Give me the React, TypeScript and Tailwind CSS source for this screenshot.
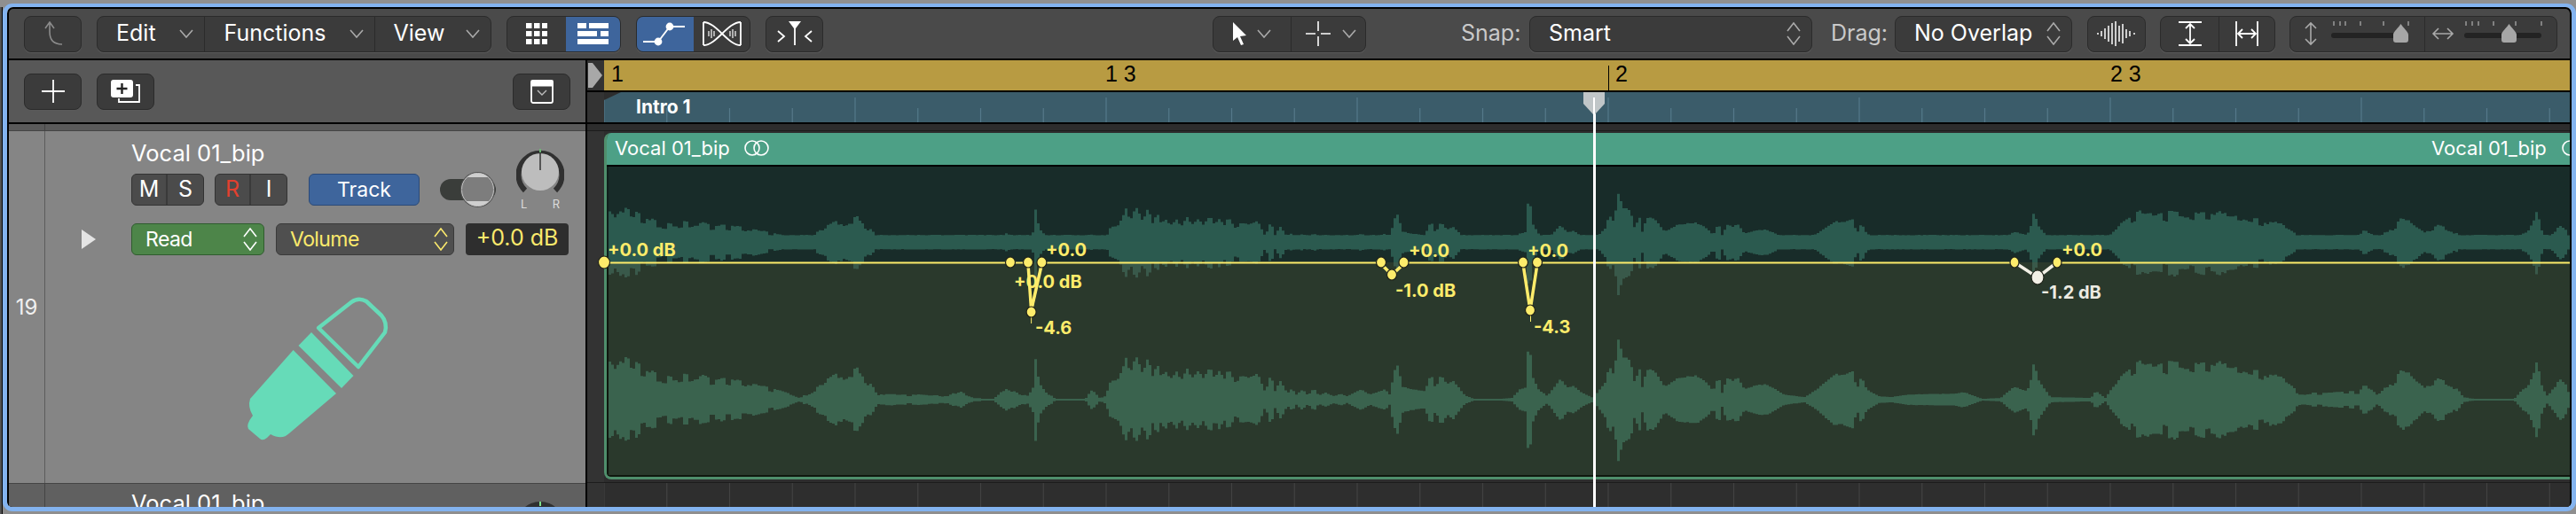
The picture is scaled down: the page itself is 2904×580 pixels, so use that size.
import React from "react";

// envelope of the take, read off the lower channel: [x, half height]
const ENV: number[][] = [
  [684, 30], [687, 62], [690, 40], [694, 45], [698, 52], [705, 46], [714, 42], [722, 36], [736, 30], [760, 28], [790, 28], [813, 25], [835, 22], [851, 18], [875, 12], [901, 2],
  [915, 12], [935, 26], [950, 30], [966, 36], [978, 24], [989, 7], [1030, 6], [1069, 5], [1079, 10], [1096, 2], [1119, 1], [1134, 16], [1145, 9], [1157, 5], [1163, 20], [1165, 52], [1168, 28], [1173, 15], [1188, 1], [1222, 1], [1230, 12], [1238, 3], [1245, 4], [1250, 20],
  [1260, 25], [1268, 48], [1273, 30], [1279, 52], [1287, 30], [1293, 50], [1298, 27], [1303, 42], [1307, 28], [1313, 33], [1318, 24], [1325, 33], [1330, 23], [1337, 36], [1342, 26], [1350, 33], [1355, 25], [1363, 38], [1368, 25], [1374, 35], [1378, 22], [1383, 36], [1392, 18], [1398, 28], [1407, 25], [1417, 30], [1425, 8], [1431, 30], [1436, 10], [1442, 22], [1450, 7], [1455, 13], [1460, 6], [1467, 12], [1473, 5], [1480, 13], [1485, 5], [1493, 8], [1503, 4], [1510, 7], [1517, 4], [1533, 12], [1543, 6], [1560, 12], [1565, 6], [1573, 43], [1580, 15], [1590, 12], [1605, 10], [1612, 30], [1617, 12], [1623, 30], [1630, 18], [1637, 22], [1650, 5], [1660, 1], [1690, 1],
  [1703, 2], [1712, 12], [1718, 14], [1722, 68], [1727, 25], [1733, 12], [1743, 4], [1758, 25], [1765, 14], [1773, 16], [1782, 8], [1795, 2], [1808, 20], [1813, 40], [1818, 28], [1823, 72], [1828, 50], [1837, 45], [1842, 15], [1846, 42], [1850, 15], [1855, 35], [1863, 35], [1875, 15], [1890, 25], [1910, 28], [1923, 20], [1930, 10], [1936, 28], [1940, 8], [1945, 25], [1952, 22], [1957, 27], [1965, 12], [1978, 17], [1990, 18], [2010, 6], [2033, 3], [2047, 12], [2067, 30], [2073, 28], [2087, 33], [2092, 12], [2097, 28], [2103, 12], [2117, 4], [2130, 3],
  [2150, 6], [2203, 7], [2212, 9], [2233, 1], [2254, 2], [2269, 15], [2284, 10], [2290, 30], [2292, 52], [2295, 25], [2310, 3], [2356, 2], [2361, 10], [2372, 2], [2387, 25], [2408, 46], [2459, 44], [2510, 42], [2561, 32], [2592, 8], [2659, 10], [2664, 18], [2679, 5], [2708, 38], [2731, 15], [2751, 30], [2777, 3], [2787, 1], [2833, 1], [2854, 25], [2859, 55], [2863, 20], [2869, 5], [2885, 25], [2897, 10],
];

function ampAt(x: number) {
  for (let i = 1; i < ENV.length; i++) {
    if (x <= ENV[i][0]) {
      const [x0, a0] = ENV[i - 1];
      const [x1, a1] = ENV[i];
      return a0 + ((a1 - a0) * (x - x0)) / (x1 - x0);
    }
  }
  return 1;
}

function noise(n: number) {
  const s = Math.sin(n * 12.9898) * 43758.5453;
  return s - Math.floor(s);
}

// stepped outline, the channels only differ in scale and noise floor
function wavePath(center: number, scale: number, floor: number) {
  const top: string[] = [];
  const bottom: string[] = [];
  for (let x = 686; x < 2897; x += 3) {
    const spiky = x < 1250 || x > 2380;
    const spike = spiky ? 0.66 + 0.42 * noise(Math.floor(x / 6)) : 1;
    const a = Math.max(ampAt(x) * scale * spike, floor);
    const up = a * (0.94 + 0.06 * noise(x));
    const down = a * (0.94 + 0.06 * noise(x + 7)) * (scale < 1 ? 1.08 : 1);
    top.push(`${x} ${(center - up).toFixed(1)} ${x + 3} ${(center - up).toFixed(1)}`);
    bottom.unshift(`${x + 3} ${(center + down).toFixed(1)} ${x} ${(center + down).toFixed(1)}`);
  }
  return `M${top.join(" L")} L${bottom.join(" L")} Z`;
}

const UPPER = wavePath(273, 0.8, 8);
const LOWER = wavePath(451, 1, 1);

const TICKS = Array.from({ length: 32 }, (_, i) => i);

function Chevron({ className = "" }: { className?: string }) {
  return (
    <svg width="16" height="10" viewBox="0 0 16 10" className={className}>
      <path d="M1 1 L8 9 L15 1" fill="none" stroke="#a9a9a9" strokeWidth="1.6" />
    </svg>
  );
}

function UpDown({ color = "#a9a9a9", className = "" }: { color?: string; className?: string }) {
  return (
    <svg width="16" height="26" viewBox="0 0 16 26" className={className}>
      <path d="M1 10 L8 1 L15 10 M1 16 L8 25 L15 16" fill="none" stroke={color} strokeWidth="1.6" />
    </svg>
  );
}

function ToolGroup({ className = "", children }: { className?: string; children?: React.ReactNode }) {
  return (
    <div className={`flex h-[41px] shrink-0 overflow-hidden rounded-lg border border-[#2b2b2b] bg-[#3b3b3b] shadow-[0_1px_0_#5a5a5a] ${className}`}>
      {children}
    </div>
  );
}

function MenuItem({ label, width, border }: { label: string; width: string; border?: boolean }) {
  return (
    <div className={`flex h-full items-center justify-between pl-[21px] pr-[12px] ${width} ${border ? "border-l border-[#2b2b2b]" : ""}`}>
      <span>{label}</span>
      <Chevron />
    </div>
  );
}

function Slider({ ticks, thumb }: { ticks: number[]; thumb: string }) {
  return (
    <div className="relative h-full w-[90px]">
      <svg width="90" height="8" viewBox="0 0 90 8" className="absolute left-0 top-[3px]">
        {ticks.map((t) => (
          <line key={t} x1={t} x2={t} y1="1" y2="6" stroke="#9a9a9a" strokeWidth="1.5" />
        ))}
      </svg>
      <div className="absolute left-0 top-[17px] h-[6px] w-[87px] rounded-full bg-[#232323]" />
      <svg width="19" height="22" viewBox="0 0 19 22" className={`absolute top-[7px] ${thumb}`}>
        <path d="M9.5 0 C12 4 18 9 18 12 V18 Q18 21 15 21 H4 Q1 21 1 18 V12 C1 9 7 4 9.5 0 Z" fill="#a6a6a6" />
      </svg>
    </div>
  );
}

function Toolbar() {
  return (
    <div className="box-content flex h-[56px] shrink-0 items-center border-b-2 border-black bg-[#4a4a4a] text-[25px] text-white">
      <ToolGroup className="ml-[17px] w-[65px] items-center justify-center">
        <svg width="26" height="28" viewBox="0 0 26 28">
          <path d="M4 8 L9 1 L14 8 M9 1 V12 C9 21 13 26 23 26" fill="none" stroke="#8c8c8c" strokeWidth="1.6" />
        </svg>
      </ToolGroup>
      <ToolGroup className="ml-[17px] w-[445px]">
        <MenuItem label="Edit" width="w-[121px]" />
        <MenuItem label="Functions" width="w-[192px]" border />
        <MenuItem label="View" width="w-[132px]" border />
      </ToolGroup>
      <ToolGroup className="ml-[17px] w-[129px]">
        <div className="flex w-[66px] items-center justify-center">
          <svg width="24" height="24" viewBox="0 0 24 24" fill="#fff">
            {[0, 9, 18].map((x) =>
              [0, 9, 18].map((y) => <rect key={`${x}${y}`} x={x} y={y} width="6.5" height="6" />)
            )}
          </svg>
        </div>
        <div className="flex flex-1 items-center justify-center bg-[#3e659c]">
          <svg width="35" height="24" viewBox="0 0 35 24" fill="#fff">
            <rect x="0" y="0" width="10" height="6" />
            <rect x="13" y="0" width="22" height="6" />
            <rect x="0" y="9" width="22" height="6" />
            <rect x="26" y="9" width="9" height="6" />
            <rect x="0" y="18" width="35" height="6" />
          </svg>
        </div>
      </ToolGroup>
      <ToolGroup className="ml-[17px] w-[129px]">
        <div className="flex w-[64px] items-center justify-center bg-[#3e659c]">
          <svg width="54" height="32" viewBox="0 0 54 32" fill="#fff" stroke="#fff" strokeWidth="1.8">
            <path d="M2 25 H19 L32 8 H49" fill="none" />
            <ellipse cx="19" cy="25" rx="3.5" ry="3.5" />
            <ellipse cx="32" cy="8" rx="3.5" ry="3.5" />
          </svg>
        </div>
        <div className="flex flex-1 items-center justify-center">
          <svg width="44" height="28" viewBox="0 0 44 28" fill="none" stroke="#fff" strokeWidth="1.8">
            <path d="M1 1 C16 1 28 27 43 27 M1 27 C16 27 28 1 43 1 M1 1 V27 M43 1 V27" />
            <path d="M7 11 V17 M10 9 V19 M13 11 V17 M31 11 V17 M34 9 V19 M37 11 V17" strokeWidth="1.2" />
          </svg>
        </div>
      </ToolGroup>
      <ToolGroup className="ml-[17px] w-[65px] items-center justify-center">
        <svg width="42" height="28" viewBox="0 0 42 28" fill="none" stroke="#fff" strokeWidth="1.8">
          <path d="M14 0 H28 L22 8 H20 Z" fill="#fff" stroke="none" />
          <path d="M21 6 V27" />
          <path d="M2 11 L9 17 L2 23 M40 11 L33 17 L40 23" />
        </svg>
      </ToolGroup>

      <ToolGroup className="ml-[439px] w-[173px]">
        <div className="flex w-[87px] items-center pl-[21px]">
          <svg width="18" height="27" viewBox="0 0 18 27" fill="#fff">
            <path d="M1 0 V21 L6 17 L10 26 L13 25 L9 16 L16 15 Z" />
          </svg>
          <Chevron className="ml-[10px]" />
        </div>
        <div className="flex flex-1 items-center border-l border-[#2b2b2b] pl-[16px]">
          <svg width="28" height="28" viewBox="0 0 28 28" stroke="#fff" strokeWidth="1.6">
            <path d="M14 0 V11 M14 17 V28 M0 14 H11 M17 14 H28" />
          </svg>
          <Chevron className="ml-[13px]" />
        </div>
      </ToolGroup>

      <span className="ml-[107px] w-[68px] shrink-0 text-[#c9c9c9]">Snap:</span>
      <ToolGroup className="ml-[9px] w-[319px] items-center justify-between pl-[21px] pr-[12px]">
        <span>Smart</span>
        <UpDown />
      </ToolGroup>
      <span className="ml-[21px] w-[64px] shrink-0 text-[#c9c9c9]">Drag:</span>
      <ToolGroup className="ml-[8px] w-[200px] items-center justify-between pl-[21px] pr-[12px]">
        <span className="whitespace-nowrap">No Overlap</span>
        <UpDown />
      </ToolGroup>

      <ToolGroup className="ml-[17px] w-[66px] items-center justify-center">
        <svg width="44" height="28" viewBox="0 0 44 28" stroke="#fff" strokeWidth="1.5">
          <path d="M1 13 V15 M5 11 V17 M9 8 V20 M13 5 V23 M17 2 V26 M21 0 V28 M25 5 V23 M29 3 V25 M33 9 V19 M37 11 V17 M42 13 V15" />
        </svg>
      </ToolGroup>
      <ToolGroup className="ml-[16px] w-[130px]">
        <div className="flex w-[65px] items-center justify-center">
          <svg width="28" height="28" viewBox="0 0 28 28" fill="none" stroke="#fff" strokeWidth="1.8">
            <path d="M1 1 H27 M1 27 H27 M14 3 V25 M9 8 L14 3 L19 8 M9 20 L14 25 L19 20" />
          </svg>
        </div>
        <div className="flex flex-1 items-center justify-center border-l border-[#2b2b2b]">
          <svg width="26" height="28" viewBox="0 0 26 28" fill="none" stroke="#fff" strokeWidth="1.8">
            <path d="M1 0 V28 M25 0 V28 M3 14 H23 M8 9 L3 14 L8 19 M18 9 L23 14 L18 19" />
          </svg>
        </div>
      </ToolGroup>
      <ToolGroup className="ml-[16px] w-[302px]">
        <div className="flex w-[151px] items-center">
          <svg width="14" height="28" viewBox="0 0 14 28" fill="none" stroke="#a9a9a9" strokeWidth="1.6" className="ml-[16px]">
            <path d="M7 2 V26 M1 8 L7 2 L13 8 M1 20 L7 26 L13 20" />
          </svg>
          <div className="ml-[16px] h-full flex-1 pt-[1px]">
            <Slider ticks={[3, 10, 16, 33, 59, 87]} thumb="left-[69px]" />
          </div>
        </div>
        <div className="flex flex-1 items-center border-l border-[#2b2b2b]">
          <svg width="26" height="14" viewBox="0 0 26 14" fill="none" stroke="#a9a9a9" strokeWidth="1.6" className="ml-[7px]">
            <path d="M2 7 H24 M8 1 L2 7 L8 13 M18 1 L24 7 L18 13" />
          </svg>
          <div className="ml-[11px] h-full flex-1 pt-[1px]">
            <Slider ticks={[2, 9, 16, 33, 58, 87]} thumb="left-[41px]" />
          </div>
        </div>
      </ToolGroup>
    </div>
  );
}

function SmallButtons({ a, b, red }: { a: string; b: string; red?: boolean }) {
  return (
    <div className="flex h-[36px] w-[82px] shrink-0 overflow-hidden rounded-md border border-[#333] bg-[#4b4b4b] text-[25px]">
      <span className={`flex w-[40px] items-center justify-center border-r-2 border-[#3a3a3a] ${red ? "text-[#e2402e]" : ""}`}>{a}</span>
      <span className="flex flex-1 items-center justify-center">{b}</span>
    </div>
  );
}

function TrackHeader() {
  return (
    <div className="flex h-[397px] bg-[#858585] text-white">
      <div className="flex w-[41px] shrink-0 items-center justify-center border-r border-[#5c5c5c] text-[24px] text-[#f0f0f0]">19</div>
      <div className="flex-1">
        <div className="flex pl-[97px]">
          <div className="w-[411px] shrink-0">
            <div className="flex h-[48px] items-center pt-[1px] text-[25.5px] leading-none">Vocal 01_bip</div>
            <div className="flex items-center">
              <SmallButtons a="M" b="S" />
              <div className="ml-[12px]">
                <SmallButtons a="R" b="I" red />
              </div>
              <div className="ml-[24px] flex h-[36px] w-[125px] items-center justify-center rounded-md border border-[#2b4a78] bg-[#3e659c] text-[23px]">Track</div>
              <div className="relative ml-[23px] h-[24px] w-[63px] rounded-full bg-[#3a3d3a]">
                <div className="absolute left-[24px] top-[-7px] h-[38px] w-[37px] rounded-full border border-[#c8c8c8] bg-[linear-gradient(#cfcfcf_0_12%,#7d7d7d_12%_85%,#cfcfcf_85%)] shadow-[0_0_0_1px_#555]" />
              </div>
            </div>
          </div>
          <div className="relative ml-[23px] mt-[20px] h-[66px] w-[54px] shrink-0">
            <svg width="54" height="56" viewBox="0 0 54 56">
              <path d="M10 47 A24.5 24.5 0 1 1 44 47" fill="none" stroke="#303030" strokeWidth="6" />
              <circle cx="27" cy="26" r="21" fill="#bdbdbd" />
              <line x1="27" y1="0" x2="27" y2="24" stroke="#333" strokeWidth="1.5" />
              <line x1="27" y1="0" x2="27" y2="4" stroke="#7fe08a" strokeWidth="1.5" />
            </svg>
            <div className="flex justify-between px-[5px] text-[13px] leading-none text-[#dcdcdc]">
              <span>L</span>
              <span>R</span>
            </div>
          </div>
        </div>
        <div className="mt-[18px] flex items-center pl-[41px]">
          <svg width="16" height="22" viewBox="0 0 16 22">
            <path d="M0 0 L16 11 L0 22 Z" fill="#e4e4e4" />
          </svg>
          <div className="ml-[40px] flex h-[36px] w-[150px] items-center justify-between rounded-md border border-[#2f5c2e] bg-[#4d8549] pl-[15px] pr-[7px] text-[23px] tracking-tight">
            <span>Read</span>
            <UpDown color="#fff" />
          </div>
          <div className="ml-[13px] flex h-[36px] w-[201px] items-center justify-between rounded-md border border-[#3a3a3a] bg-[#4f4f4f] pl-[15px] pr-[6px] text-[23px] tracking-tight text-[#fbe96c]">
            <span>Volume</span>
            <UpDown color="#fbe96c" />
          </div>
          <div className="ml-[13px] flex h-[36px] w-[116px] items-center justify-center rounded-sm bg-[#2e2e2e] pb-[3px] text-[25px] text-[#fbe96c]">+0.0 dB</div>
        </div>
        <svg width="170" height="170" viewBox="275 330 170 170" fill="#66dbb8" className="ml-[224px] mt-[44px]">
          <path d="M359 368 L396 339 Q404 333 413 338 L430 354 Q437 362 434 373 L404 412 Z" fill="none" stroke="#66dbb8" strokeWidth="4.5" strokeLinejoin="round" />
          <path d="M351 373 L398.5 422 L385 436 L336.5 388 Z" />
          <path d="M330.6 393 L379 442 L326 487 Q318 495 305 488 L301 492 Q296 496 293 493 L280 482 Q277 477 285 467 Q279 457 282 448 Z" />
        </svg>
      </div>
    </div>
  );
}

function AutomationOverlay() {
  const point = (cx: number, cy: number, fill = "#fdec6b", rx = 5.5, ry = 6) => (
    <ellipse key={`${cx}-${cy}`} cx={cx} cy={cy} rx={rx} ry={ry} fill={fill} stroke="#20231a" strokeWidth="1.2" />
  );
  return (
    <svg width="2216" height="391" viewBox="681 150 2216 391" className="pointer-events-none absolute left-0 top-0 overflow-visible">
      <defs>
        <clipPath id="above">
          <rect x="681" y="188" width="2216" height="108" />
        </clipPath>
        <clipPath id="below">
          <rect x="681" y="296" width="2216" height="242" />
        </clipPath>
      </defs>
      <path d={UPPER} fill="#2b5a4f" clipPath="url(#above)" />
      <path d={UPPER} fill="#39594a" clipPath="url(#below)" />
      <path d={LOWER} fill="#3a634e" />

      <path d="M681 296.5 H1159 L1162.6 352 L1174.4 296.5 H1557 L1569 310 L1582.5 296.5 H1717 L1725 350 L1733 296.5 H2271 M2319 296.5 H2897" fill="none" stroke="#fdec6b" strokeWidth="2" />
      <path d="M1159 298 L1162.6 350 L1174.4 298 M1557 298 L1569 310 L1582.5 298 M1717 298 L1725 350 L1733 298" fill="none" stroke="#fdec6b" strokeWidth="3.5" />
      <path d="M2271 296 L2297 313 L2319 296" fill="none" stroke="#f2f0e6" strokeWidth="3.5" />
      <path d="M1162.6 355 V365 M1725.5 353 V363" stroke="#fdec6b" strokeWidth="1" />
      {point(681, 296, "#fdec6b", 6.5, 7)}
      {point(1139, 296)}
      {point(1159, 296)}
      {point(1174.4, 296)}
      {point(1162.6, 352)}
      {point(1557, 296)}
      {point(1582.5, 296)}
      {point(1569, 310)}
      {point(1717, 296)}
      {point(1733, 296)}
      {point(1725, 350)}
      {point(2271, 296, "#fdec6b", 5, 6)}
      {point(2319, 296, "#fdec6b", 5, 6)}
      {point(2297, 313, "#f2f0e6", 7, 8)}
    </svg>
  );
}

function Region() {
  return (
    <div className="relative mt-[2px] h-[391px] w-[2216px] overflow-visible">
      <div className="flex h-full flex-col overflow-hidden rounded-l-lg border-b-[3px] border-l-[3px] border-[#4f8f6c]">
        <div className="flex h-[38px] shrink-0 items-center justify-between border-b-2 border-black bg-[#4da086] pb-[2px] pl-[9px] text-[22px] text-white">
          <div className="flex items-center">
            <span>Vocal 01_bip</span>
            <svg width="30" height="18" viewBox="0 0 30 18" fill="none" stroke="#fff" strokeWidth="1.6" className="ml-[15px]">
              <circle cx="10" cy="9" r="8" />
              <circle cx="20" cy="9" r="8" />
            </svg>
          </div>
          <div className="flex w-[156px] shrink-0 items-center overflow-hidden">
            <span className="whitespace-nowrap">Vocal 01_bip</span>
            <svg width="20" height="18" viewBox="0 0 20 18" fill="none" stroke="#fff" strokeWidth="1.6" className="ml-[16px] shrink-0">
              <circle cx="10" cy="9" r="8" />
            </svg>
          </div>
        </div>
        <div className="h-[108px] shrink-0 border-l-2 border-[#10201c] bg-[#182c29]" />
        <div className="flex-1 border-b-2 border-l-2 border-[#10180f] bg-[#2a392c]" />
      </div>
      <AutomationOverlay />
      <span className="absolute left-[4px] top-[117px] text-[20px] font-bold text-[#fdec6b]">+0.0 dB</span>
      <span className="absolute left-[498px] top-[117px] text-[20px] font-bold text-[#fdec6b]">+0.0</span>
      <span className="absolute left-[462px] top-[153px] text-[20px] font-bold text-[#fdec6b]">+0.0 dB</span>
      <span className="absolute left-[486px] top-[205px] text-[20px] font-bold text-[#fdec6b]">-4.6</span>
      <span className="absolute left-[907px] top-[118px] text-[20px] font-bold text-[#fdec6b]">+0.0</span>
      <span className="absolute left-[892px] top-[163px] text-[20px] font-bold text-[#fdec6b]">-1.0 dB</span>
      <span className="absolute left-[1041px] top-[118px] text-[20px] font-bold text-[#fdec6b]">+0.0</span>
      <span className="absolute left-[1048px] top-[204px] text-[20px] font-bold text-[#fdec6b]">-4.3</span>
      <span className="absolute left-[1643px] top-[117px] text-[20px] font-bold text-[#fdec6b]">+0.0</span>
      <span className="absolute left-[1620px] top-[165px] text-[20px] font-bold text-[#ecebe2]">-1.2 dB</span>
    </div>
  );
}

function Timeline() {
  return (
    <div className="flex min-w-0 flex-1 flex-col bg-[#2d2d2d]">
      {/* ruler */}
      <div className="flex h-[36px] shrink-0 border-b-2 border-black">
        <div className="flex w-[19px] shrink-0 items-center bg-[#333]">
          <svg width="18" height="30" viewBox="0 0 18 30">
            <path d="M1 1 H6 L17 15 L6 29 H1 Z" fill="#a8a8a8" />
          </svg>
        </div>
        <div className="relative flex-1 bg-[#b89b42] font-['Liberation_Sans',sans-serif] text-[25px] leading-[30px] text-black">
          <span className="absolute left-[8px] top-0">1</span>
          <span className="absolute left-[565px] top-0">1 3</span>
          <div className="absolute left-[1132px] top-[6px] h-[28px] w-[1px] bg-black" />
          <span className="absolute left-[1140px] top-0">2</span>
          <span className="absolute left-[1698px] top-0">2 3</span>
        </div>
      </div>
      {/* arrangement marker */}
      <div className="flex h-[36px] shrink-0 border-b-2 border-black">
        <div className="w-[19px] shrink-0 bg-[#333]" />
        <div className="relative flex-1 bg-[#3b5c6a] pl-[36px] text-[21px] font-bold leading-[34px] text-white [clip-path:polygon(19px_0,100%_0,100%_100%,0_100%,0_9px)]">
          Intro 1
          <svg width="2216" height="34" viewBox="0 0 2216 34" className="absolute left-0 top-0" stroke="#55798a" strokeWidth="1.2">
            {TICKS.map((i) => (
              <line key={i} x1={i * 70.75} x2={i * 70.75} y1={i % 4 === 0 ? 6 : 18} y2="34" />
            ))}
          </svg>
        </div>
      </div>
      <div className="h-[8px] shrink-0 border-b border-[#1c1c1c] bg-[#2d2d2d]" />
      {/* track lane */}
      <div className="flex h-[397px] shrink-0 border-b border-[#1c1c1c]">
        <div className="w-[19px] shrink-0 bg-[#333]" />
        <Region />
      </div>
      {/* next track lane */}
      <div className="flex flex-1 bg-[#2e2e2e]">
        <div className="w-[19px] shrink-0 bg-[#333]" />
        <svg width="2216" height="27" viewBox="0 0 2216 27" stroke="#424242" strokeWidth="1.2">
          {TICKS.map((i) => (
            <line key={i} x1={i * 70.75} x2={i * 70.75} y1="0" y2="27" />
          ))}
        </svg>
      </div>
    </div>
  );
}

function Sidebar() {
  return (
    <div className="box-content flex w-[650px] shrink-0 flex-col border-r-2 border-black text-white">
      <div className="box-content flex h-[70px] shrink-0 items-center border-b-2 border-black bg-[#585858]">
        <ToolGroup className="ml-[17px] w-[65px] items-center justify-center">
          <svg width="26" height="26" viewBox="0 0 26 26" stroke="#fff" strokeWidth="1.8">
            <path d="M13 0 V26 M0 13 H26" />
          </svg>
        </ToolGroup>
        <ToolGroup className="ml-[17px] w-[65px] items-center justify-center">
          <svg width="34" height="27" viewBox="0 0 34 27">
            <path d="M28 6 H32 V25 H9 V21" fill="none" stroke="#fff" strokeWidth="1.8" />
            <rect x="0" y="0" width="25" height="20" rx="3" fill="#fff" />
            <path d="M12.5 4 V16 M6.5 10 H18.5" stroke="#222" strokeWidth="2.4" />
          </svg>
        </ToolGroup>
        <ToolGroup className="ml-auto mr-[17px] w-[65px] items-center justify-center">
          <svg width="26" height="27" viewBox="0 0 26 27" fill="none" stroke="#fff">
            <rect x="1" y="1" width="24" height="25" rx="2" strokeWidth="1.8" />
            <rect x="1" y="1" width="24" height="6" fill="#fff" />
            <path d="M8 12 L13 17 L18 12" stroke="#bdbdbd" strokeWidth="1.4" />
          </svg>
        </ToolGroup>
      </div>
      <div className="flex h-[8px] shrink-0 border-b border-[#444] bg-[#5a5a5a]">
        <div className="w-[41px] border-r border-[#444]" />
      </div>
      <TrackHeader />
      <div className="flex flex-1 overflow-hidden border-t border-[#444] bg-[#606060]">
        <div className="w-[41px] shrink-0 border-r border-[#444]" />
        <div className="w-[508px] shrink-0 pl-[97px] pt-[7px] text-[25.5px] leading-[30px]">Vocal 01_bip</div>
        <div className="relative ml-[23px] mt-[20px] h-[54px] w-[54px] shrink-0 rounded-full bg-[#303030]">
          <div className="absolute left-[26px] top-0 h-[5px] w-[2px] bg-[#7fe08a]" />
        </div>
      </div>
    </div>
  );
}

export default function App() {
  return (
    <div className="flex h-[580px] w-[2904px] overflow-hidden bg-[#8f8f8f] font-['Inter',sans-serif]">
      <div className="mt-[8px] w-[3px] shrink-0 border-r border-black bg-[#525252]" />
      <div className="mt-[4px] h-[573px] w-[2901px] shrink-0 overflow-hidden rounded-[11px] border-x-[5px] border-b-[5px] border-t-4 border-[#83b3ef]">
        <div className="relative flex h-full flex-col overflow-hidden rounded-t-[7px] border-x-2 border-t-2 border-black bg-black">
          <Toolbar />
          <div className="flex min-h-0 flex-1">
            <Sidebar />
            <Timeline />
          </div>
          {/* playhead */}
          <div className="absolute bottom-0 left-[1786px] top-[94px] w-[3px] bg-white" />
          <svg width="26" height="26" viewBox="0 0 26 26" className="absolute left-[1774px] top-[94px]">
            <path d="M1 0 H25 V13 L14 25 H12 L1 13 Z" fill="#c0c6c8" />
            <line x1="13" y1="6" x2="13" y2="26" stroke="#fff" strokeWidth="2" />
          </svg>
        </div>
      </div>
    </div>
  );
}
